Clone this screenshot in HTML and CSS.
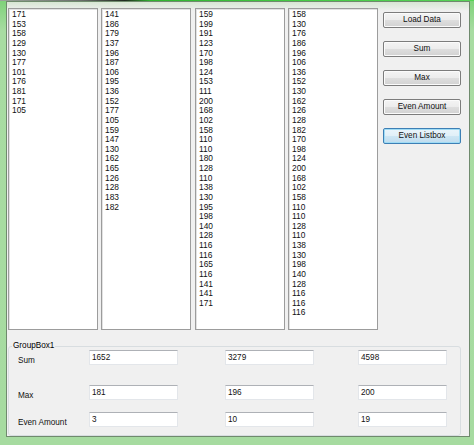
FILE: index.html
```html
<!DOCTYPE html>
<html>
<head>
<meta charset="utf-8">
<link rel="stylesheet" href="styles.css">
</head>
<body>
<div class="window">
  <div class="titlebar"></div>
  <div class="frame">
    <div class="client">
      <div class="top">
        <div class="listbox">
          <div>171</div><div>153</div><div>158</div><div>129</div><div>130</div><div>177</div><div>101</div><div>176</div><div>181</div><div>171</div><div>105</div>
        </div>
        <div class="listbox lb2">
          <div>141</div><div>186</div><div>179</div><div>137</div><div>196</div><div>187</div><div>106</div><div>195</div><div>136</div><div>152</div><div>177</div><div>105</div><div>159</div><div>147</div><div>130</div><div>162</div><div>165</div><div>126</div><div>128</div><div>183</div><div>182</div>
        </div>
        <div class="listbox lb3">
          <div>159</div><div>199</div><div>191</div><div>123</div><div>170</div><div>198</div><div>124</div><div>153</div><div>111</div><div>200</div><div>168</div><div>102</div><div>158</div><div>110</div><div>110</div><div>180</div><div>128</div><div>110</div><div>138</div><div>130</div><div>195</div><div>198</div><div>140</div><div>128</div><div>116</div><div>116</div><div>165</div><div>116</div><div>141</div><div>141</div><div>171</div>
        </div>
        <div class="listbox lb4">
          <div>158</div><div>130</div><div>176</div><div>186</div><div>196</div><div>106</div><div>136</div><div>152</div><div>130</div><div>162</div><div>126</div><div>128</div><div>182</div><div>170</div><div>198</div><div>124</div><div>200</div><div>168</div><div>102</div><div>158</div><div>110</div><div>110</div><div>128</div><div>110</div><div>138</div><div>130</div><div>198</div><div>140</div><div>128</div><div>116</div><div>116</div><div>116</div>
        </div>
        <div class="buttons">
          <div class="btn">Load Data</div>
          <div class="btn">Sum</div>
          <div class="btn">Max</div>
          <div class="btn">Even Amount</div>
          <div class="btn focused">Even Listbox</div>
        </div>
      </div>
      <div class="groupbox">
        <div class="gb-title">GroupBox1</div>
        <div class="rows">
          <div class="row r1">
            <div class="lbl">Sum</div>
            <div class="tb">1652</div>
            <div class="tb c2">3279</div>
            <div class="tb c3">4598</div>
          </div>
          <div class="row r2">
            <div class="lbl">Max</div>
            <div class="tb">181</div>
            <div class="tb c2">196</div>
            <div class="tb c3">200</div>
          </div>
          <div class="row r3">
            <div class="lbl">Even Amount</div>
            <div class="tb">3</div>
            <div class="tb c2">10</div>
            <div class="tb c3">19</div>
          </div>
        </div>
      </div>
    </div>
  </div>
</div>
</body>
</html>
```
FILE: styles.css
```css
html, body {
  margin: 0;
  padding: 0;
}
body {
  width: 474px;
  height: 445px;
  overflow: hidden;
  font-family: "Liberation Sans", Arial, sans-serif;
  font-size: 8px;
  color: #000;
}
.window {
  width: 474px;
  height: 445px;
  display: flex;
  flex-direction: column;
  background: #9fd898;
}
.titlebar {
  height: 3px;
  background: linear-gradient(to right, #9aa59a 0, #6b6f6b 80px, #1f2a1f 125px, #2fb42f 150px, #45cc45 300px, #56d456 474px);
}
.frame {
  flex: 1;
  display: flex;
  padding: 0 4px 8px 6px;
  background: linear-gradient(to bottom, #7fd27a 0, #a8dca2 30px, #a6dba0 100%);
}
.client {
  flex: 1;
  background: linear-gradient(to bottom, #d7e6d3 0, #f0f0f0 9px, #f0f0f0 100%);
  border: 1px solid #6f8a6d;
  display: flex;
  flex-direction: column;
}
.top {
  display: flex;
  margin-top: 6px;
  margin-left: 1px;
}
.listbox {
  box-sizing: border-box;
  width: 90px;
  height: 322px;
  background: #fff;
  border: 1px solid #9c9c9c;
  box-shadow: inset 1px 1px 0 #e2e2e2;
  padding: 1px 2px 0 3px;
  line-height: 9.63px;
  font-size: 8.4px;
  color: #111;
}
.lb2 { margin-left: 3px; }
.lb3 { margin-left: 4px; }
.lb4 { margin-left: 3px; }
.buttons {
  display: flex;
  flex-direction: column;
  gap: 13px;
  margin-left: 5px;
  margin-top: 4px;
}
.btn {
  box-sizing: border-box;
  width: 78px;
  height: 16px;
  border: 1px solid #7c7c7c;
  border-radius: 2px;
  background: linear-gradient(to bottom, #f4f4f4 0, #ececec 50%, #dedede 51%, #d2d2d2 100%);
  box-shadow: inset 0 0 0 1px #fbfbfb;
  text-align: center;
  line-height: 14px;
  font-size: 8.2px;
  color: #111;
}
.btn.focused {
  border-color: #3d7fb5;
  box-shadow: inset 0 0 0 1px #9fdcf5;
  background: linear-gradient(to bottom, #eaf5fb 0, #e0eff8 50%, #cde6f4 51%, #c0dcee 100%);
}
.groupbox {
  box-sizing: border-box;
  width: 453px;
  margin-left: 1px;
  margin-top: 16px;
  border: 1px solid #d8dde0;
  border-radius: 3px;
  line-height: 10px;
  padding-bottom: 7px;
}
.gb-title {
  width: fit-content;
  margin: -6px 0 0 3px;
  padding: 0 1px;
  background: #f0f0f0;
  font-size: 8.2px;
}
.rows {
  margin-top: -1px;
}
.row {
  display: flex;
  align-items: flex-start;
  padding-left: 9px;
}
.r2 { margin-top: 19px; }
.r3 { margin-top: 11px; }
.lbl {
  width: 71px;
  padding-top: 6px;
  font-size: 8.2px;
  color: #111;
}
.tb {
  box-sizing: border-box;
  width: 89px;
  height: 15px;
  background: #fff;
  border: 1px solid #e3e6ea;
  border-top-color: #aeb1b6;
  padding-left: 2px;
  line-height: 13px;
  font-size: 8.2px;
  color: #111;
}
.c2 { margin-left: 47px; }
.c3 { margin-left: 44px; }
```
